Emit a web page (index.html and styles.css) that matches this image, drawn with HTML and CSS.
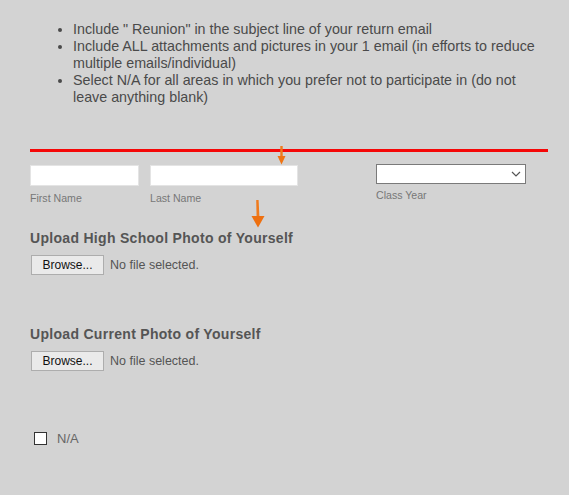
FILE: index.html
```html
<!DOCTYPE html>
<html>
<head>
<meta charset="utf-8">
<link rel="stylesheet" href="styles.css">
</head>
<body>
<div class="page">
  <ul class="notes">
    <li>Include " Reunion" in the subject line of your return email</li>
    <li>Include ALL attachments and pictures in your 1 email (in efforts to reduce multiple emails/individual)</li>
    <li>Select N/A for all areas in which you prefer not to participate in (do not leave anything blank)</li>
  </ul>
  <div class="rule"></div>
  <div class="names">
    <div class="field first">
      <div class="input"></div>
      <div class="label">First Name</div>
    </div>
    <div class="field last">
      <div class="input"></div>
      <div class="label">Last Name</div>
    </div>
    <div class="field year">
      <div class="select">
        <svg width="10" height="6" viewBox="0 0 10 6"><path d="M1 1 L5 5 L9 1" fill="none" stroke="#555" stroke-width="1.2"/></svg>
      </div>
      <div class="label">Class Year</div>
    </div>
  </div>
  <section class="upload up1">
    <h2>Upload High School Photo of Yourself</h2>
    <div class="file"><button class="browse">Browse...</button><span class="none">No file selected.</span></div>
  </section>
  <section class="upload up2">
    <h2>Upload Current Photo of Yourself</h2>
    <div class="file"><button class="browse">Browse...</button><span class="none">No file selected.</span></div>
  </section>
  <label class="na"><span class="box"></span><span>N/A</span></label>

  <svg class="arrow small" width="9" height="19" viewBox="0 0 9 19">
    <rect x="3.3" y="0" width="2.4" height="12" fill="#f07a1c"/>
    <path d="M0.5 10 L8.5 10 L4.5 18.5 Z" fill="#ef7414"/>
  </svg>
  <svg class="arrow big" width="14" height="28" viewBox="0 0 14 28">
    <path d="M5.2 0 L7.6 0 L8.4 17 L5.6 17 Z" fill="#f07a1c"/>
    <path d="M0.5 16 L13.5 16 L7 27.5 Z" fill="#ee7010"/>
  </svg>
</div>
</body>
</html>
```
FILE: styles.css
```css
html, body {
  margin: 0;
  padding: 0;
  background: #d3d3d3;
}
body {
  font-family: "Liberation Sans", Arial, sans-serif;
  width: 569px;
  height: 495px;
  overflow: hidden;
}
.page {
  position: relative;
  padding: 21px 21px 0 30px;
}
.notes {
  margin: 0 5px 0 0;
  padding-left: 43px;
  font-size: 14.3px;
  line-height: 17px;
  color: #4a4a4a;
}
.notes li {
  margin: 0;
}
.rule {
  margin-top: 43px;
  height: 3px;
  background: #f50808;
}
.names {
  display: flex;
  margin-top: 13px;
}
.field .input {
  height: 19px;
  background: #fff;
  border: 1px solid #e4e4e4;
}
.first { width: 109px; }
.last { width: 148px; margin-left: 11px; }
.year { width: 150px; margin-left: 78px; margin-top: -1px; }
.label {
  font-size: 10.6px;
  line-height: 13px;
  color: #777;
  margin-top: 6px;
}
.year .label { margin-top: 5px; }
.select {
  box-sizing: border-box;
  height: 20px;
  background: #fff;
  border: 1px solid #7a7a7a;
  display: flex;
  align-items: center;
  justify-content: flex-end;
  padding-right: 4px;
}
.upload h2 {
  margin: 0;
  font-size: 14px;
  letter-spacing: 0.3px;
  line-height: 16px;
  font-weight: bold;
  color: #555;
}
.up1 { margin-top: 25px; }
.up2 { margin-top: 51px; }
.file {
  display: flex;
  align-items: center;
  margin-top: 9px;
  padding-left: 1px;
}
.browse {
  box-sizing: border-box;
  width: 73px;
  height: 20px;
  margin: 0;
  padding: 0;
  background: #eaeaea;
  border: 1px solid #adadad;
  border-radius: 0;
  font-family: "Liberation Sans", Arial, sans-serif;
  font-size: 12px;
  color: #111;
}
.none {
  margin-left: 6px;
  font-size: 12.5px;
  color: #555;
}
.na {
  display: flex;
  align-items: center;
  margin-top: 60px;
  padding-left: 4px;
  font-size: 13px;
  color: #666;
}
.box {
  box-sizing: border-box;
  width: 13px;
  height: 13px;
  background: #fff;
  border: 1px solid #333;
  margin-right: 10px;
}
.arrow {
  position: absolute;
}
.arrow.small { left: 277px; top: 146px; }
.arrow.big { left: 251px; top: 200px; }
```
